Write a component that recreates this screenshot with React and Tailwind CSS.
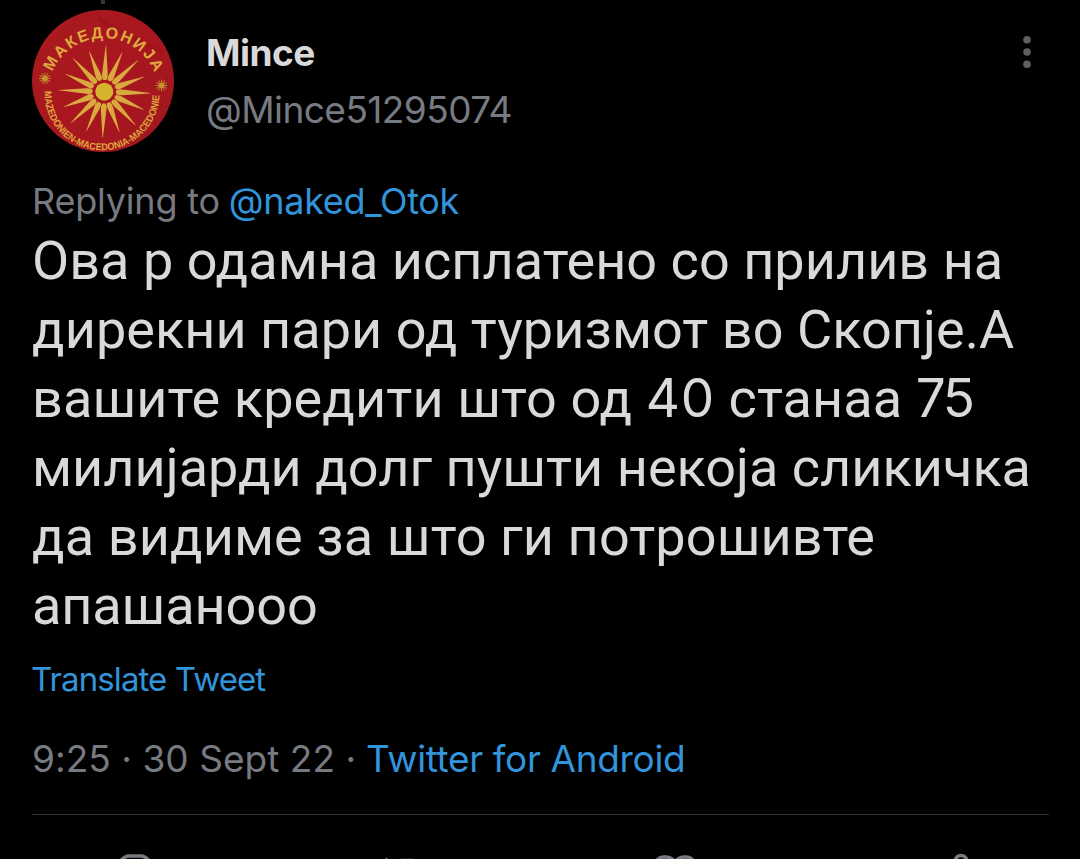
import { clsx } from 'clsx'

const rays = Array.from({ length: 16 }, (_, i) => ({
  angle: i * 22.5 + 2,
  length: i % 2 === 0 ? 46 : 43,
}))

const lines = [
  { text: 'Ова р одамна исплатено со прилив на', tracking: 'tracking-[0.03px]' },
  { text: 'дирекни пари од туризмот во Скопје.А', tracking: 'tracking-[0.06px]' },
  { text: 'вашите кредити што од 40 станаа 75', tracking: 'tracking-[0.12px]' },
  { text: 'милијарди долг пушти некоја сликичка', tracking: 'tracking-[0.03px]' },
  { text: 'да видиме за што ги потрошивте', tracking: 'tracking-[0.11px]' },
  { text: 'апашанооо', tracking: 'tracking-[-0.1px]' },
]

function SmallSun({ x, y }) {
  return (
    <g transform={`translate(${x} ${y})`} stroke="#bd7a2a" strokeWidth="1">
      {[0, 30, 60, 90, 120, 150].map((a) => (
        <line key={a} x1="-6" x2="6" y1="0" y2="0" transform={`rotate(${a})`} />
      ))}
      <circle r="2.8" fill="#c9902f" stroke="none" />
    </g>
  )
}

function Avatar() {
  return (
    <svg viewBox="0 0 142 142" className="h-[142px] w-[142px] shrink-0 overflow-visible">
      <defs>
        <linearGradient id="cloth" x1="0" y1="0" x2="1" y2="1">
          <stop offset="0" stopColor="#a81c1e" />
          <stop offset="0.5" stopColor="#a9161f" />
          <stop offset="1" stopColor="#a01820" />
        </linearGradient>
        <path id="arcTop" d="M20.5 62 A55 55 0 0 1 124.5 69" />
        <path id="arcBottom" d="M12.5 81 A57.55 57.55 0 1 0 127.5 80" />
      </defs>
      <circle cx="71" cy="71" r="71" fill="url(#cloth)" />
      <path d="M66 8 Q86 22 130 42" fill="none" stroke="#8a1217" strokeWidth="4" opacity="0.35" />

      {/* Sun */}
      <g transform="translate(72.3 81.7)" fill="#d9a83f">
        {rays.map((r) => (
          <path
            key={r.angle}
            transform={`rotate(${r.angle})`}
            d={`M-1.8 -12 Q-3.4 -14.5 -2.8 -18 L-0.2 -${r.length} H0.2 L2.8 -18 Q3.4 -14.5 1.8 -12 Q0 -11.2 -1.8 -12 Z`}
          />
        ))}
        <circle r="9" fill="#d5b32c" />
      </g>
      <SmallSun x={13} y={68.5} />
      <SmallSun x={129.5} y={75.5} />

      {/* Lettering */}
      <text fill="#dfa83f" className="font-['Liberation_Sans',sans-serif] text-[16px] font-bold">
        <textPath href="#arcTop" textLength="130">МАКЕДОНИЈА</textPath>
      </text>
      <text fill="#dca53c" className="font-['Liberation_Sans',sans-serif] text-[10px] font-bold">
        <textPath href="#arcBottom" textLength="180" lengthAdjust="spacingAndGlyphs">
          MAZEDONIEN-MACEDONIA-MACEDONIE
        </textPath>
      </text>
    </svg>
  )
}

function TweetLine({ text, tracking }) {
  return (
    <p className={clsx('h-[69px] whitespace-nowrap', tracking)}>
      {text.split(/(\d+)/).map((part, i) =>
        /\d/.test(part) ? (
          <span
            key={i}
            className={clsx(
              "font-['Inter',sans-serif] text-[53px] leading-none",
              part === '40' ? 'tracking-[0.8px]' : 'tracking-[-2.5px]',
            )}
          >
            {part}
          </span>
        ) : (
          part
        ),
      )}
    </p>
  )
}

function Actions() {
  return (
    <div className="flex h-[44px] items-start text-[#777b81]">
      <svg viewBox="0 0 48 44" className="ml-[79px] h-11 w-12 shrink-0" fill="none" stroke="currentColor" strokeWidth="3.5">
        <path d="M17 8 H31 A14 14 0 0 1 31 35 L24 41 V35 H17 A14 14 0 0 1 17 8 Z" />
      </svg>
      <svg viewBox="0 0 60 44" className="ml-[214px] h-11 w-[60px] shrink-0" fill="none" stroke="currentColor" strokeWidth="3.5">
        <path d="M5 20 L13.5 12 L22 20 M13.5 13 V32 Q13.5 38 19 38 H30 M28 12.5 H39 Q45 12.5 45 18 V38 M37 31 L45 39 L53 31" />
      </svg>
      <svg viewBox="0 0 48 44" className="ml-[218px] h-11 w-12 shrink-0" fill="none" stroke="currentColor" strokeWidth="3.5">
        <path d="M24 14 C20 8 15 9 13 9 C8 9 4 13 4 19 C4 30 17 38 24 42 C31 38 44 30 44 19 C44 13 40 9 35 9 C33 9 28 8 24 14 Z" />
      </svg>
      <svg viewBox="0 0 48 44" className="ml-[238px] h-11 w-12 shrink-0" fill="none" stroke="currentColor" strokeWidth="3.5">
        <circle cx="24" cy="13.5" r="6" />
        <circle cx="10" cy="34" r="6" />
        <circle cx="38" cy="34" r="6" />
        <path d="M21 19 L13 29 M27 19 L35 29" />
      </svg>
    </div>
  )
}

export default function App() {
  return (
    <div className="h-[859px] w-[1080px] overflow-hidden bg-black pl-8 font-['Inter',sans-serif] text-[#777b81]">
      {/* Thread line */}
      <div className="ml-[69px] h-1 w-1 bg-[#333639]" />

      {/* Author */}
      <header className="flex h-[177px] items-start pt-1.5">
        <Avatar />
        <div className="ml-8 flex flex-col gap-[9px] pt-[19px]">
          <h1 className="h-12 text-[37px] leading-[48px] font-bold tracking-[-0.5px] whitespace-nowrap text-[#d9d9d9]">
            Mince
          </h1>
          <p className="h-12 text-[37px] leading-[48px] tracking-[-0.55px] whitespace-nowrap">@Mince51295074</p>
        </div>
        <svg viewBox="0 0 8 34" className="mt-[25px] mr-[49px] ml-auto h-[34px] w-2" fill="#5f6062">
          <circle cx="4" cy="4.7" r="3.8" />
          <circle cx="4" cy="17" r="3.8" />
          <circle cx="4" cy="29.3" r="3.8" />
        </svg>
      </header>

      <p className="flex h-[45px] gap-[9px] text-[36px] leading-[40px] whitespace-nowrap">
        <span className="tracking-[-0.2px]">Replying to</span>
        <a className="tracking-[-0.3px] text-[#3294db]">@naked_Otok</a>
      </p>

      {/* Tweet text */}
      <div className="font-['Roboto',sans-serif] text-[54px] leading-[69px] text-[#d9d9d9]">
        {lines.map((line) => (
          <TweetLine key={line.text} text={line.text} tracking={line.tracking} />
        ))}
      </div>

      <p className="mt-[19px] -ml-px h-10 text-[33px] leading-[40px] tracking-[-0.9px] whitespace-nowrap text-[#3294db]">
        Translate Tweet
      </p>

      <p className="mt-[36px] flex h-12 text-[37px] leading-[48px] whitespace-nowrap">
        <span className="w-[334px] tracking-[0.04px]">9:25 · 30 Sept 22 ·</span>
        <a className="tracking-[-0.35px] text-[#3294db]">Twitter for Android</a>
      </p>

      <div className="mt-[31px] mr-[31px] h-px bg-[#313336]" />
      <div className="pt-[33px]">
        <Actions />
      </div>
    </div>
  )
}
